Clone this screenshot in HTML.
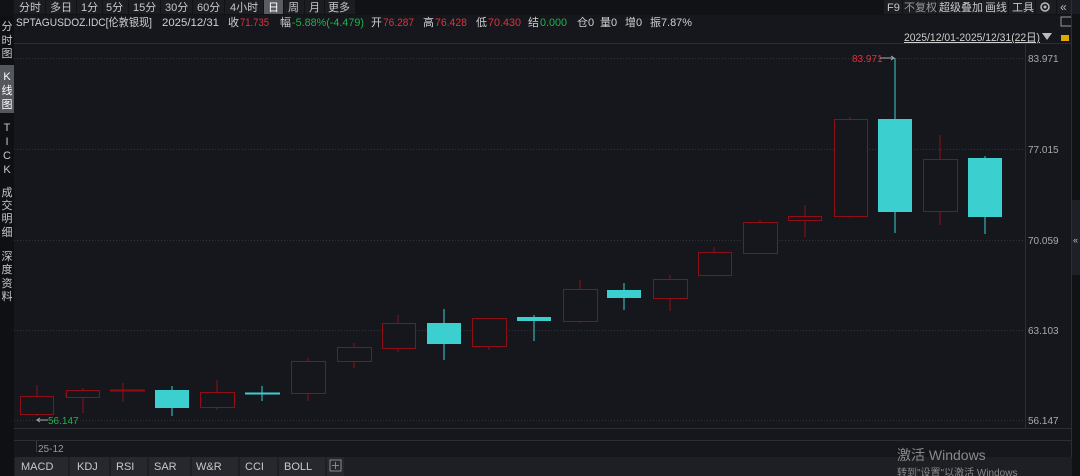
<!DOCTYPE html><html><head><meta charset="utf-8"><style>
html,body{margin:0;padding:0;background:#15171c;width:1080px;height:476px;overflow:hidden}
svg{display:block}
text{font-family:"Liberation Sans","Noto Sans CJK SC",sans-serif}
</style></head><body>
<svg width="1080" height="476" xmlns="http://www.w3.org/2000/svg">
<rect width="1080" height="476" fill="#15171c"/>
<rect x="0" y="0" width="1080" height="15" fill="#101215"/>
<g fill="#1b1d22">
<rect x="14" y="0" width="31" height="14"/><rect x="46" y="0" width="30" height="14"/><rect x="77" y="0" width="25" height="14"/><rect x="103" y="0" width="25" height="14"/><rect x="129" y="0" width="31" height="14"/><rect x="161" y="0" width="31" height="14"/><rect x="193" y="0" width="31" height="14"/><rect x="225" y="0" width="38" height="14"/><rect x="284" y="0" width="20" height="14"/><rect x="305" y="0" width="19" height="14"/><rect x="325" y="0" width="30" height="14"/>
<rect x="884" y="0" width="18" height="14"/><rect x="903" y="0" width="33" height="14"/><rect x="937" y="0" width="44" height="14"/><rect x="982" y="0" width="26" height="14"/><rect x="1009" y="0" width="26" height="14"/><rect x="1036" y="0" width="20" height="14"/><rect x="1057" y="0" width="23" height="14"/>
</g>
<rect x="264" y="0" width="19" height="14" fill="#5a5c63"/>
<g font-size="11" fill="#c8c8c8">
<text x="19" y="11">分时</text><text x="50" y="11">多日</text><text x="81" y="11">1分</text><text x="106" y="11">5分</text><text x="133" y="11">15分</text><text x="165" y="11">30分</text><text x="197" y="11">60分</text><text x="230" y="11">4小时</text><text x="268" y="11" fill="#fff">日</text><text x="288" y="11">周</text><text x="309" y="11">月</text><text x="328" y="11">更多</text>
<text x="887" y="11">F9</text><text x="904" y="11" fill="#999">不复权</text><text x="939" y="11">超级叠加</text><text x="985" y="11">画线</text><text x="1012" y="11">工具</text>
</g>
<circle cx="1045" cy="7" r="4" fill="none" stroke="#bbb" stroke-width="1.5"/><circle cx="1045" cy="7" r="1.5" fill="#bbb"/>
<text x="1060" y="11" font-size="12" fill="#bbb">«</text>
<g font-size="11">
<text x="16" y="26" fill="#d0d0d0" textLength="136" lengthAdjust="spacingAndGlyphs">SPTAGUSDOZ.IDC[伦敦银现]</text>
<text x="162" y="26" fill="#d0d0d0" textLength="57" lengthAdjust="spacingAndGlyphs">2025/12/31</text>
<text x="228" y="26" fill="#d0d0d0">收</text><text x="240" y="26" fill="#e0323c" textLength="29" lengthAdjust="spacingAndGlyphs">71.735</text>
<text x="280" y="26" fill="#d0d0d0">幅</text><text x="292" y="26" fill="#1fb34a" textLength="72" lengthAdjust="spacingAndGlyphs">-5.88%(-4.479)</text>
<text x="371" y="26" fill="#d0d0d0">开</text><text x="383" y="26" fill="#e0323c" textLength="31" lengthAdjust="spacingAndGlyphs">76.287</text>
<text x="423" y="26" fill="#d0d0d0">高</text><text x="435" y="26" fill="#e0323c" textLength="32" lengthAdjust="spacingAndGlyphs">76.428</text>
<text x="476" y="26" fill="#d0d0d0">低</text><text x="488" y="26" fill="#e0323c" textLength="33" lengthAdjust="spacingAndGlyphs">70.430</text>
<text x="528" y="26" fill="#d0d0d0">结</text><text x="540" y="26" fill="#1fb34a" textLength="27" lengthAdjust="spacingAndGlyphs">0.000</text>
<text x="577" y="26" fill="#d0d0d0">仓0</text><text x="600" y="26" fill="#d0d0d0">量0</text><text x="625" y="26" fill="#d0d0d0">增0</text><text x="650" y="26" fill="#d0d0d0" textLength="42" lengthAdjust="spacingAndGlyphs">振7.87%</text>
<text x="904" y="41" fill="#d0d0d0" text-decoration="underline" textLength="136" lengthAdjust="spacingAndGlyphs">2025/12/01-2025/12/31(22日)</text>
</g>
<path d="M1042 33h10l-5 7z" fill="#bbb"/>
<rect x="1061" y="35" width="8" height="6" fill="#e0a800"/>
<rect x="1061" y="17" width="12" height="9" fill="none" stroke="#999"/>
<rect x="0" y="15" width="14" height="461" fill="#0e1013"/>
<rect x="0" y="65" width="14" height="48" fill="#55575e"/>
<g font-size="11" fill="#c8c8c8" text-anchor="middle">
<text x="7" y="30">分</text><text x="7" y="44">时</text><text x="7" y="57">图</text>
<text x="7" y="80" fill="#fff">K</text><text x="7" y="94" fill="#fff">线</text><text x="7" y="108" fill="#fff">图</text>
<text x="7" y="131">T</text><text x="7" y="145">I</text><text x="7" y="159">C</text><text x="7" y="173">K</text>
<text x="7" y="196">成</text><text x="7" y="209">交</text><text x="7" y="222">明</text><text x="7" y="236">细</text>
<text x="7" y="260">深</text><text x="7" y="273">度</text><text x="7" y="287">资</text><text x="7" y="300">料</text>
</g>
<line x1="14" y1="43.5" x2="1071" y2="43.5" stroke="#2c2e33"/>
<line x1="1025.5" y1="43" x2="1025.5" y2="428" stroke="#2c2e33"/>
<line x1="1071.5" y1="0" x2="1071.5" y2="476" stroke="#2c2e33"/>
<rect x="1072" y="15" width="8" height="461" fill="#101215"/>
<rect x="1072" y="200" width="8" height="75" fill="#1e2025"/>
<text x="1073" y="243" font-size="9" fill="#bbb">«</text>
<g stroke="#33353b" stroke-dasharray="1,2">
<line x1="14" y1="58.5" x2="1025" y2="58.5"/><line x1="14" y1="149.5" x2="1025" y2="149.5"/><line x1="14" y1="240.5" x2="1025" y2="240.5"/><line x1="14" y1="330.5" x2="1025" y2="330.5"/><line x1="14" y1="420.5" x2="1025" y2="420.5"/>
</g>
<line x1="14" y1="428.5" x2="1071" y2="428.5" stroke="#2c2e33"/>
<line x1="14" y1="440.5" x2="1071" y2="440.5" stroke="#2c2e33"/>
<line x1="36.5" y1="441" x2="36.5" y2="452" stroke="#3a3c42"/>
<text x="38" y="452" font-size="10" fill="#999">25-12</text>
<g font-size="10" fill="#aaa">
<text x="1028" y="62">83.971</text><text x="1028" y="153">77.015</text><text x="1028" y="244">70.059</text><text x="1028" y="334">63.103</text><text x="1028" y="424">56.147</text>
</g>
<rect x="14" y="457" width="1058" height="19" fill="#1d1f24"/>
<g fill="#26282d"><rect x="15" y="457" width="53" height="19"/><rect x="70" y="457" width="39" height="19"/><rect x="111" y="457" width="36" height="19"/><rect x="149" y="457" width="41" height="19"/><rect x="192" y="457" width="46" height="19"/><rect x="240" y="457" width="37" height="19"/><rect x="279" y="457" width="46" height="19"/><rect x="327" y="457" width="17" height="19"/></g>
<g font-size="11" fill="#c8c8c8"><text x="21" y="470">MACD</text><text x="77" y="470">KDJ</text><text x="116" y="470">RSI</text><text x="154" y="470">SAR</text><text x="196" y="470">W&amp;R</text><text x="245" y="470">CCI</text><text x="284" y="470">BOLL</text></g>
<rect x="330" y="460" width="11" height="11" fill="none" stroke="#888"/><path d="M335.5 462v7M332 465.5h7" stroke="#888"/>
<text x="897" y="460" font-size="14" fill="#8a8a8a">激活 Windows</text>
<text x="897" y="476" font-size="10" fill="#8a8a8a">转到"设置"以激活 Windows</text>
<g stroke="#8e1016" fill="none" stroke-width="1">
<path d="M37 385v31M66 393v4M83 388v25M123 383v19M217 380v30M308 358v43M354 343v25M398 315v37M489 318v32M580 280v43M670 275v36M714 247v28M760 220v33M805 205v32M850 117v101M940 135v90"/>
<rect x="20.5" y="396.5" width="33" height="18" fill="#15171c"/>
<rect x="66.5" y="390.5" width="33" height="7" fill="#15171c"/>
<rect x="110.5" y="390" width="34" height="1" stroke-width="1"/>
<rect x="200.5" y="392.5" width="34" height="15" fill="#15171c"/>
<rect x="291.5" y="361.5" width="34" height="32" fill="#15171c"/>
<rect x="337.5" y="347.5" width="34" height="14" fill="#15171c"/>
<rect x="382.5" y="323.5" width="33" height="25" fill="#15171c"/>
<rect x="472.5" y="318.5" width="34" height="28" fill="#15171c"/>
<rect x="563.5" y="289.5" width="34" height="32" fill="#15171c"/>
<rect x="653.5" y="279.5" width="34" height="19" fill="#15171c"/>
<rect x="698.5" y="252.5" width="33" height="23" fill="#15171c"/>
<rect x="743.5" y="222.5" width="34" height="31" fill="#15171c"/>
<rect x="788.5" y="216.5" width="33" height="4" fill="#15171c"/>
<rect x="834.5" y="119.5" width="33" height="97" fill="#15171c"/>
<rect x="923.5" y="159.5" width="34" height="52" fill="#15171c"/>
</g>
<g stroke="#3ccfcf" stroke-width="1">
<path d="M172 386v30M262 386v15M444 309v51M534 315v26M624 283v27M895 58v175M985 156v78"/>
</g>
<g fill="#3ccfcf">
<rect x="155" y="390" width="34" height="18"/>
<rect x="245" y="392.5" width="35" height="2"/>
<rect x="427" y="323" width="34" height="21"/>
<rect x="517" y="317" width="34" height="4"/>
<rect x="607" y="290" width="34" height="8"/>
<rect x="878" y="119" width="34" height="93"/>
<rect x="968" y="158" width="34" height="59"/>
</g>
<text x="852" y="62" font-size="10" fill="#e0323c">83.971</text>
<path d="M880 58h14M891 56l3 2-3 2" stroke="#aaa" fill="none"/>
<path d="M37 420h11M40 418l-3 2 3 2" stroke="#aaa" fill="none"/>
<text x="48" y="424" font-size="10" fill="#1fb34a">56.147</text>
</svg>
</body></html>
